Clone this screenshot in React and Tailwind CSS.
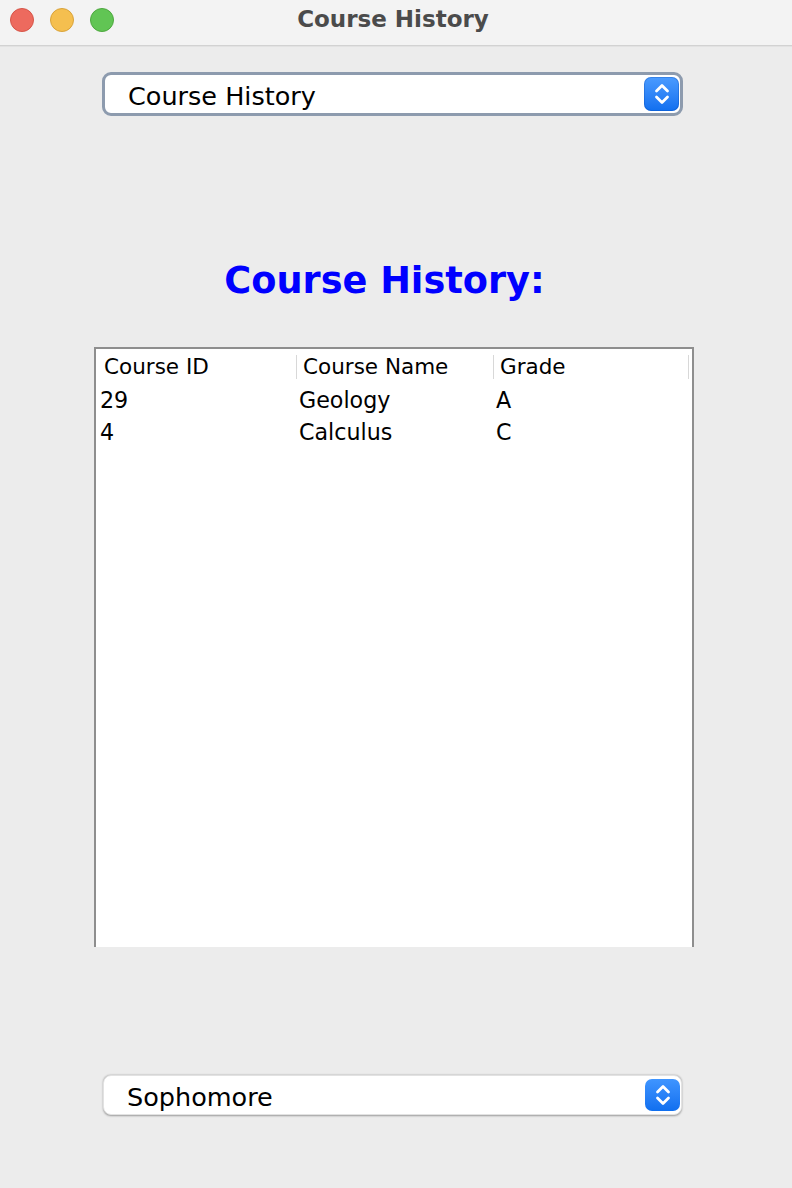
import React from "react";

const font = { fontFamily: '"DejaVu Sans", "Lucida Grande", sans-serif' };

function Stepper({ size = "lg" }) {
  return (
    <div
      className={
        size === "lg"
          ? "w-[35px] h-[34px] rounded-[7px] bg-gradient-to-b from-[#4a9bff] to-[#0f6fef] flex items-center justify-center shadow-[inset_0_0_0_1px_rgba(0,60,160,0.25)]"
          : "w-[35px] h-[32px] rounded-[7px] bg-gradient-to-b from-[#3f95ff] to-[#0f6fef] flex items-center justify-center"
      }
    >
      <svg width="18" height="26" viewBox="0 0 18 26" fill="none">
        <path d="M3.5 10 L9 4.5 L14.5 10" stroke="white" strokeWidth="2.8" strokeLinecap="round" strokeLinejoin="round" />
        <path d="M3.5 16 L9 21.5 L14.5 16" stroke="white" strokeWidth="2.8" strokeLinecap="round" strokeLinejoin="round" />
      </svg>
    </div>
  );
}

const rows = [
  { id: "29", name: "Geology", grade: "A" },
  { id: "4", name: "Calculus", grade: "C" },
];

export default function App() {
  return (
    <div className="w-[792px] h-[1188px] bg-[#ececec] flex flex-col overflow-hidden" style={font}>
      {/* title bar */}
      <div className="h-[46px] bg-[#f3f3f3] border-b border-[#d2d2d2] relative flex items-center justify-center shrink-0">
        <div className="absolute left-[10px] top-[8px] flex gap-[16px]">
          <div className="w-[24px] h-[24px] rounded-full bg-[#ed6a5e] border border-[#d65548]" />
          <div className="w-[24px] h-[24px] rounded-full bg-[#f5bf4f] border border-[#d9a33a]" />
          <div className="w-[24px] h-[24px] rounded-full bg-[#61c554] border border-[#4ea83f]" />
        </div>
        <span className="text-[23px] font-bold text-[#4b4b4b] -ml-[6px] -mt-[6px]">Course History</span>
      </div>
      <div className="h-px bg-[#e2e2e2]" />

      {/* top select */}
      <div className="mt-[25px] ml-[102px] w-[581px] h-[44px] rounded-[9px] border-[3px] border-[#8d9bae] bg-white flex items-center justify-between pl-[23px] pr-[1px]">
        <span className="text-[25.5px] leading-[30px] text-black mt-[4px]">Course History</span>
        <Stepper />
      </div>

      {/* heading */}
      <h1 className="mt-[142px] text-center text-[36.7px] leading-[46px] font-bold text-[#0000ff] pr-[23px]">
        Course History:
      </h1>

      {/* table */}
      <div className="mt-[43px] ml-[94px] w-[600px] h-[600px] border-2 border-b-0 border-[#8e8e8e] bg-white">
        <div className="flex h-[36px] items-center text-[21.5px] text-black">
          <div className="w-[200px] pl-[8px] leading-[26px]">Course ID</div>
          <div className="w-[197px] border-l border-[#d8d8d8] pl-[6px] h-[24px] leading-[24px]">Course Name</div>
          <div className="w-[195px] border-l border-[#d8d8d8] pl-[6px] h-[24px] leading-[24px]">Grade</div>
          <div className="border-l border-[#d8d8d8] h-[24px]" />
        </div>
        {rows.map((r) => (
          <div key={r.id} className="flex h-[32px] items-center text-[22.2px] text-black">
            <div className="w-[201px] pl-[4px]">{r.id}</div>
            <div className="w-[197px] pl-[2px]">{r.name}</div>
            <div className="w-[195px] pl-[2px]">{r.grade}</div>
          </div>
        ))}
      </div>

      {/* bottom select */}
      <div className="mt-[128px] ml-[103px] w-[579px] h-[40px] rounded-[8px] bg-white shadow-[0_0.5px_2px_rgba(0,0,0,0.35)] border border-[#e2e2e2] flex items-center justify-between pl-[23px] pr-[1px]">
        <span className="text-[25.5px] leading-[30px] text-black mt-[3px]">Sophomore</span>
        <Stepper size="sm" />
      </div>
    </div>
  );
}
